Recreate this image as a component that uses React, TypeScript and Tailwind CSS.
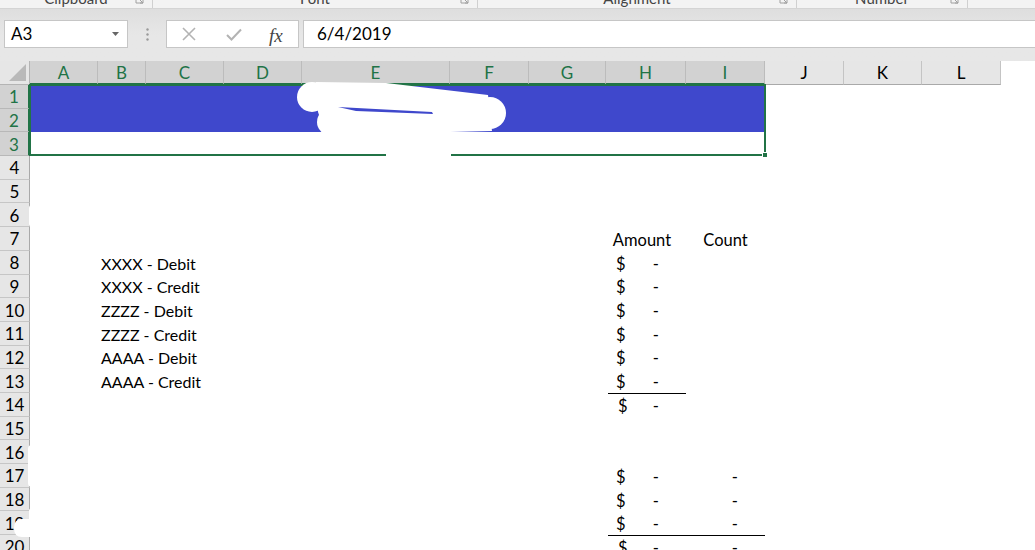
import React from 'react'

const colLetters = ['A', 'B', 'C', 'D', 'E', 'F', 'G', 'H', 'I', 'J', 'K', 'L', 'M']

type RowData = {
  label?: string
  amount?: 'head' | 'val'
  count?: 'head' | 'val'
  lineH?: boolean
  lineI?: boolean
}

const rowsData: Record<number, RowData> = {
  7: { amount: 'head', count: 'head' },
  8: { label: 'XXXX - Debit', amount: 'val' },
  9: { label: 'XXXX - Credit', amount: 'val' },
  10: { label: 'ZZZZ - Debit', amount: 'val' },
  11: { label: 'ZZZZ - Credit', amount: 'val' },
  12: { label: 'AAAA - Debit', amount: 'val' },
  13: { label: 'AAAA - Credit', amount: 'val' },
  14: { amount: 'val', lineH: true },
  17: { amount: 'val', count: 'val' },
  18: { amount: 'val', count: 'val' },
  19: { amount: 'val', count: 'val' },
  20: { amount: 'val', count: 'val', lineH: true, lineI: true },
}

const ribbonGroups = [
  { label: 'Clipboard', width: 'w-[153px]' },
  { label: 'Font', width: 'w-[325px]' },
  { label: 'Alignment', width: 'w-[319px]' },
  { label: 'Number', width: 'w-[171px]' },
]

function Launcher() {
  return (
    <svg width="9" height="9" viewBox="0 0 9 9" className="absolute right-[8px] top-[-5px]">
      <path d="M1 1 V8 H8" fill="none" stroke="#a0a0a0" strokeWidth="1" />
      <path d="M3 3 L8 8 M5 8 H8 V5" fill="none" stroke="#a0a0a0" strokeWidth="1" />
    </svg>
  )
}

function Ribbon() {
  return (
    <div className="flex h-[8px] overflow-hidden bg-[#f3f3f3] text-[15px] leading-[15px] text-[#444]">
      {ribbonGroups.map((g) => (
        <div key={g.label} className={`relative flex shrink-0 justify-center border-r border-[#d0d0d0] ${g.width}`}>
          <span className="mt-[-9px]">{g.label}</span>
          <Launcher />
        </div>
      ))}
      <div className="flex-1" />
    </div>
  )
}

function FormulaBar() {
  return (
    <div className="h-[53px] border-t border-[#d4d4d4] bg-gradient-to-b from-[#dedede] via-[#e7e7e7] to-[#e7e7e7] pt-[11px]">
      <div className="flex h-[28px] items-stretch">
        <div className="ml-[4px] flex w-[124px] items-center justify-between border border-[#c6c6c6] bg-white pl-[6px] pr-[8px]">
          <span className="text-[17px] text-black">A3</span>
          <svg width="7" height="4" viewBox="0 0 7 4">
            <path d="M0 0 H7 L3.5 4 Z" fill="#666" />
          </svg>
        </div>
        <div className="flex w-[38px] items-center justify-center">
          <svg width="3" height="13" viewBox="0 0 3 13">
            <circle cx="1.5" cy="1.5" r="1.2" fill="#9a9a9a" />
            <circle cx="1.5" cy="6.5" r="1.2" fill="#9a9a9a" />
            <circle cx="1.5" cy="11.5" r="1.2" fill="#9a9a9a" />
          </svg>
        </div>
        <div className="relative flex w-[133px] items-center border border-[#c6c6c6] bg-white">
          <svg width="14" height="14" viewBox="0 0 14 14" className="absolute left-[15px]">
            <path d="M1 1 L13 13 M13 1 L1 13" stroke="#b3b3b3" strokeWidth="1.6" />
          </svg>
          <svg width="16" height="13" viewBox="0 0 16 13" className="absolute left-[59px]">
            <path d="M1 7 L5.5 11.5 L15 1.5" fill="none" stroke="#b3b3b3" strokeWidth="2" />
          </svg>
          <span className="absolute left-[102px] top-[1px] font-['Liberation_Serif',serif] text-[19px] italic text-[#444]">
            fx
          </span>
        </div>
        <div className="ml-[4px] mr-[-2px] flex flex-1 items-center border border-[#c6c6c6] bg-white pl-[13px]">
          <span className="text-[17px] text-black">6/4/2019</span>
        </div>
      </div>
    </div>
  )
}

function ColumnHeader() {
  return (
    <div className="grid h-[24px] grid-cols-[30px_68px_48px_78px_78px_148px_79px_77px_80px_79px_79px_78px_79px]">
      <div className="relative border-b border-r border-[#b4b4b4] bg-[#e6e6e6]">
        <svg width="18" height="17" viewBox="0 0 18 17" className="absolute bottom-[3px] right-[2px]">
          <path d="M17 0 V17 H0 Z" fill="#b9b9b9" />
        </svg>
      </div>
      {colLetters.map((l, i) => (
        <div
          key={l}
          className={
            i <= 8
              ? 'flex items-center justify-center border-b-2 border-r border-b-[#217346] border-r-[#bcbcbc] bg-[#d2d2d2] pt-[2px] text-[17px] leading-[20px] text-[#217346]'
              : 'flex items-center justify-center border-b border-r border-b-[#a9a9a9] border-r-[#c4c4c4] bg-[#e6e6e6] pt-[1px] text-[17px] leading-[20px] text-black'
          }
        >
          {l}
        </div>
      ))}
    </div>
  )
}

function Amount() {
  return (
    <div className="flex h-full items-center justify-between pl-[10px] pr-[27px] pt-[2px] text-black">
      <span>$</span>
      <span>-</span>
    </div>
  )
}

function SheetRow({ n }: { n: number }) {
  const d = rowsData[n] ?? {}
  const sel = n <= 3
  return (
    <div className="grid h-[23.7px] grid-cols-[30px_68px_48px_78px_78px_148px_79px_77px_80px_79px_79px_78px_79px] grid-rows-[23.7px]">
      <div
        className={
          sel
            ? 'flex h-full items-center justify-center border-b border-r-2 border-b-[#b8b8b8] border-r-[#217346] bg-[#d2d2d2] pt-[2px] text-[17px] leading-[20px] text-[#217346]'
            : 'flex h-full items-center justify-center border-b border-r border-b-[#c6c6c6] border-r-[#a9a9a9] bg-[#e6e6e6] pt-[2px] text-[17px] leading-[20px] text-black'
        }
      >
        {n}
      </div>
      {colLetters.map((l, c) => {
        const blue = n <= 2 && c <= 8
        let content: React.ReactNode = null
        let cls = 'h-full min-w-0 whitespace-nowrap text-[16.5px] leading-[20px] text-black'
        if (blue) cls += ' bg-[#3f48cc]'
        if (c === 1 && d.label) {
          content = <div className="flex h-full items-center pl-[3px] pt-[2px] text-[16px]">{d.label}</div>
        }
        if (c === 7) {
          if (d.lineH) cls += ' border-t border-black ml-[2px]'
          if (d.amount === 'head')
            content = <div className="flex h-full items-center justify-center pr-[8px] pt-[2px]">Amount</div>
          if (d.amount === 'val') content = <Amount />
        }
        if (c === 8) {
          if (d.lineI) cls += ' border-t border-black'
          if (d.count === 'head') content = <div className="flex h-full items-center justify-center pt-[2px]">Count</div>
          if (d.count === 'val')
            content = <div className="flex h-full items-center justify-end pr-[27px] pt-[2px]">-</div>
        }
        return (
          <div key={l} className={cls}>
            {content}
          </div>
        )
      })}
    </div>
  )
}

function Redactions() {
  return (
    <svg width="1035" height="550" viewBox="0 0 1035 550" className="pointer-events-none absolute left-0 top-0">
      <g fill="#fff">
        <circle cx="312" cy="97" r="15" />
        <polygon points="316,82 386,83 488,95 492,131 326,135 318,112" />
        <circle cx="490" cy="113" r="16" />
        <rect x="386" y="126" width="65" height="33" />
        <circle cx="330" cy="122" r="13" />
      </g>
      <polygon points="338,107 432,112 433,114 356,111" fill="#3f48cc" />
      <g fill="#fff">
        <rect x="29" y="205" width="6" height="22" rx="3" />
        <rect x="28" y="445" width="8" height="42" rx="4" />
        <path d="M22 519 H34 V537 H22 Q14 537 14 528 Q14 519 22 519 Z" />
        <rect x="29" y="508" width="6" height="16" rx="3" />
      </g>
    </svg>
  )
}

export default function App() {
  const rows = Array.from({ length: 20 }, (_, i) => i + 1)
  return (
    <div className="relative h-[550px] w-[1035px] overflow-hidden bg-white font-[Lato,sans-serif]">
      <Ribbon />
      <FormulaBar />
      <div className="w-[1080px]">
        <ColumnHeader />
        <div className="relative">
          {rows.map((n) => (
            <SheetRow key={n} n={n} />
          ))}
          {/* selection A1:I3 */}
          <div className="absolute left-[29px] top-[-1px] h-[72px] w-[737px] border-2 border-[#217346]">
            <div className="absolute bottom-[-4px] right-[-4px] h-[6px] w-[6px] border border-white bg-[#217346]" />
          </div>
        </div>
      </div>
      <Redactions />
    </div>
  )
}
